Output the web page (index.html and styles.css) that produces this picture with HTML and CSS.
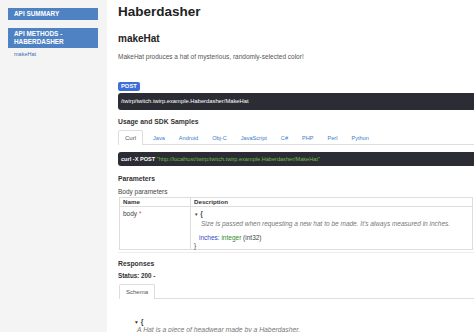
FILE: index.html
```html
<!DOCTYPE html>
<html>
<head>
<meta charset="utf-8">
<link rel="stylesheet" href="styles.css">
</head>
<body>
<div class="page">
  <nav class="sidebar">
    <div class="nav-head">API SUMMARY</div>
    <div class="nav-head nav-head-two">API METHODS - HABERDASHER</div>
    <a class="nav-link">makeHat</a>
  </nav>
  <main class="main">
    <h1 class="title">Haberdasher</h1>
    <h2 class="method">makeHat</h2>
    <p class="desc">MakeHat produces a hat of mysterious, randomly-selected color!</p>
    <div class="badge-row"><span class="badge">POST</span></div>
    <div class="codebar url">/twirp/twitch.twirp.example.Haberdasher/MakeHat</div>
    <h3 class="section usage">Usage and SDK Samples</h3>
    <ul class="tabs">
      <li class="tab active">Curl</li>
      <li class="tab">Java</li>
      <li class="tab">Android</li>
      <li class="tab">Obj-C</li>
      <li class="tab">JavaScript</li>
      <li class="tab">C#</li>
      <li class="tab">PHP</li>
      <li class="tab">Perl</li>
      <li class="tab">Python</li>
    </ul>
    <div class="codebar curl"><b>curl -X POST</b> <span class="str">"http://localhost/twirp/twitch.twirp.example.Haberdasher/MakeHat"</span></div>
    <h3 class="section params">Parameters</h3>
    <div class="sub">Body parameters</div>
    <table class="ptable">
      <thead>
        <tr><th class="col-name">Name</th><th>Description</th></tr>
      </thead>
      <tbody>
        <tr>
          <td class="col-name">body <span class="req">*</span></td>
          <td class="desc-cell">
            <div class="line"><span class="tri">▼</span> <b>{</b></div>
            <div class="line ital">Size is passed when requesting a new hat to be made. It's always measured in inches.</div>
            <div class="line prop"><span class="pname">inches:</span> <span class="ptype">integer</span> (int32)</div>
            <div class="line close">}</div>
          </td>
        </tr>
      </tbody>
    </table>
    <div class="rule"></div>
    <h3 class="section responses">Responses</h3>
    <div class="status">Status: 200 - </div>
    <div class="tabs schema-tabs"><span class="tab active">Schema</span></div>
    <div class="schema">
      <div class="sline"><span class="tri">▼</span> <b>{</b></div>
      <div class="sline ital">A Hat is a piece of headwear made by a Haberdasher.</div>
    </div>
  </main>
</div>
</body>
</html>
```

FILE: styles.css
```css
html, body {
  margin: 0;
  padding: 0;
  height: 332px;
  overflow: hidden;
  background: #ffffff;
}
body {
  font-family: "Liberation Sans", Arial, sans-serif;
  color: #333333;
  font-size: 6.5px;
}
.page {
  display: flex;
  height: 332px;
}
.sidebar {
  width: 107px;
  flex: none;
  background: #f4f4f4;
  padding: 8px 9px 0 8px;
  box-sizing: border-box;
  display: flex;
  flex-direction: column;
}
.nav-head {
  background: #4f82c3;
  color: #ffffff;
  font-weight: bold;
  font-size: 6.4px;
  line-height: 12px;
  height: 12px;
  padding: 0 6px;
}
.nav-head-two {
  margin-top: 8px;
  height: auto;
  line-height: 8px;
  padding: 2px 6px;
}
.nav-link {
  margin-top: 3px;
  padding-left: 6px;
  font-size: 5.5px;
  line-height: 7px;
  color: #3a6fb5;
}
.main {
  flex: 1;
  min-width: 0;
  padding-left: 11px;
  display: flex;
  flex-direction: column;
  align-items: stretch;
}
.title {
  margin: 4px 0 0;
  font-size: 13.5px;
  line-height: 16px;
  font-weight: bold;
  color: #222222;
}
.method {
  margin: 13px 0 0;
  font-size: 10px;
  line-height: 12px;
  font-weight: bold;
  color: #222222;
}
.desc {
  margin: 8px 0 0;
  font-size: 6.5px;
  line-height: 8px;
  color: #555555;
}
.badge-row {
  margin-top: 21px;
  height: 9px;
  display: flex;
}
.badge {
  background: #3e6fd8;
  color: #ffffff;
  font-weight: bold;
  font-size: 5.8px;
  line-height: 9px;
  padding: 0 3px;
  border-radius: 2px;
}
.codebar {
  background: #2b2c34;
  color: #ffffff;
  border-radius: 3px 0 0 3px;
  margin-right: -8px;
  padding-left: 3px;
  font-size: 5.8px;
  white-space: nowrap;
}
.url {
  margin-top: 2px;
  height: 17px;
  line-height: 17px;
}
.section {
  margin: 0;
  font-size: 6.8px;
  line-height: 8px;
  font-weight: bold;
  color: #333333;
}
.usage {
  margin-top: 8px;
}
.tabs {
  margin: 4px 0 0;
  padding: 0;
  list-style: none;
  display: flex;
  border-bottom: 1px solid #dddddd;
  height: 15px;
  box-sizing: border-box;
}
.tab {
  padding: 0 6px;
  font-size: 5.6px;
  line-height: 14px;
  color: #3d7cc9;
  border: 1px solid transparent;
  border-bottom: none;
  margin-bottom: -1px;
}
.tab.active {
  color: #555555;
  background: #ffffff;
  border-color: #dddddd;
  border-radius: 2px 2px 0 0;
  padding: 0 6px;
  margin-right: 3px;
  font-size: 6px;
  line-height: 14px;
  height: 15px;
  box-sizing: border-box;
}
.curl {
  margin-top: 7px;
  height: 14px;
  line-height: 14px;
  font-size: 5.6px;
}
.curl b {
  font-weight: bold;
}
.str {
  color: #6cbf43;
}
.params {
  margin-top: 9px;
}
.sub {
  margin-top: 5px;
  font-size: 6.5px;
  line-height: 8px;
  color: #444444;
}
.ptable {
  margin-top: 1px;
  margin-left: 1px;
  width: calc(100% - 2px);
  border-collapse: collapse;
  font-size: 6.5px;
  color: #444444;
}
.ptable th, .ptable td {
  border: 1px solid #dddddd;
  text-align: left;
  vertical-align: top;
  padding: 0 3px;
}
.ptable th {
  font-weight: bold;
  line-height: 8px;
  font-size: 6.2px;
  color: #333333;
}
.col-name {
  width: 64px;
}
.ptable td {
  padding-top: 3px;
  line-height: 8px;
}
.req {
  color: #d9534f;
}
.desc-cell {
  padding-left: 3px;
}
.line {
  line-height: 8px;
}
.tri {
  font-size: 4.5px;
}
.ital {
  font-style: italic;
  color: #777777;
  padding-left: 7px;
  margin-top: 1px;
}
.prop {
  margin-top: 6px;
  padding-left: 5px;
}
.pname {
  color: #3348c8;
}
.ptype {
  color: #2f8a2f;
}
.close {
  line-height: 7px;
}
.rule {
  margin-top: 2px;
  border-top: 1px solid #eeeeee;
  margin-right: -8px;
}
.responses {
  margin-top: 7px;
}
.status {
  margin-top: 4px;
  font-size: 6.3px;
  line-height: 8px;
  font-weight: bold;
  color: #333333;
}
.schema-tabs {
  margin-top: 4px;
  margin-left: 1px;
}
.schema-tabs .tab.active {
  padding: 0 6px;
  color: #555555;
}
.schema {
  margin-top: 19px;
  padding-left: 16px;
  font-size: 6.8px;
}
.sline {
  line-height: 7px;
}
.schema .tri {
  font-size: 4.8px;
}
.schema .ital {
  padding-left: 3px;
  margin-top: 0;
}
```
